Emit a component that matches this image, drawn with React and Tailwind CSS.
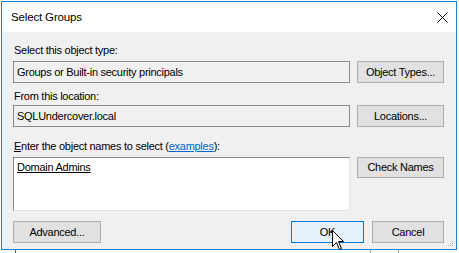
import React from "react";

function Btn({ children, w, primary }) {
  return (
    <div
      className={
        "h-[22px] flex items-center justify-center border " +
        (primary ? "border-[#0078d7] bg-[#e5f1fb] " : "border-[#adadad] bg-[#e1e1e1] ") +
        w
      }
    >
      {children}
    </div>
  );
}

export default function App() {
  return (
    <div className="w-[459px] h-[253px] bg-white relative overflow-hidden font-['Liberation_Sans',Arial,sans-serif] text-black">
      <div className="pt-[1px] pl-[1px]">
        <div className="w-[456px] h-[249px] border border-[#1883d7] flex flex-col">
          <div className="h-[30px] bg-white flex items-center justify-between pl-[9px] pr-[8px]">
            <span className="text-[11.5px] leading-[14px] tracking-[-0.15px]">Select Groups</span>
            <svg width="11" height="11" viewBox="0 0 11 11">
              <path d="M0.5 0.5 L10.5 10.5 M10.5 0.5 L0.5 10.5" stroke="#111" strokeWidth="1" fill="none" />
            </svg>
          </div>
          <div className="flex-1 bg-[#f0f0f0] pl-[11px] pr-[12px] flex flex-col text-[11px] leading-[13px] tracking-[-0.27px] relative">
            <div className="mt-[12px] pl-[1px]">Select this object type:</div>
            <div className="mt-[4px] flex gap-[7px]">
              <div className="w-[337px] h-[22px] border border-[#8a8a8a] bg-[#f0f0f0] flex items-center pl-[3px]">
                Groups or Built-in security principals
              </div>
              <Btn w="w-[87px]">Object Types...</Btn>
            </div>
            <div className="mt-[7px] pl-[1px]">From this location:</div>
            <div className="mt-[2px] flex gap-[7px]">
              <div className="w-[337px] h-[22px] border border-[#8a8a8a] bg-[#f0f0f0] flex items-center pl-[3px]">
                SQLUndercover.local
              </div>
              <Btn w="w-[87px]">Locations...</Btn>
            </div>
            <div className="mt-[13px] pl-[1px]">
              <span className="underline">E</span>nter the object names to select (
              <span className="text-[#0066cc] underline">examples</span>):
            </div>
            <div className="mt-[4px] flex gap-[7px] items-start">
              <div className="w-[337px] h-[54px] border border-[#8a8a8a] border-r-[#e3e3e3] border-b-[#e3e3e3] bg-white pl-[3px] pt-[3px]">
                <span className="underline">Domain Admins</span>
              </div>
              <Btn w="w-[87px] !h-[21px]">Check Names</Btn>
            </div>
            <div className="mt-[10px] flex items-center">
              <Btn w="w-[88px]">Advanced...</Btn>
              <div className="flex-1" />
              <Btn w="w-[73px]" primary>OK</Btn>
              <div className="w-[8px]" />
              <Btn w="w-[72px]">Cancel</Btn>
            </div>
            <svg className="absolute right-[2px] bottom-[2px]" width="6" height="6" viewBox="0 0 6 6">
              <rect x="4" y="0" width="1" height="1" fill="#b0b0b0" />
              <rect x="2" y="2" width="1" height="1" fill="#b0b0b0" />
              <rect x="4" y="2" width="1" height="1" fill="#b0b0b0" />
              <rect x="0" y="4" width="1" height="1" fill="#b0b0b0" />
              <rect x="2" y="4" width="1" height="1" fill="#b0b0b0" />
              <rect x="4" y="4" width="1" height="1" fill="#b0b0b0" />
            </svg>
          </div>
        </div>
      </div>
      <div className="absolute left-[15px] top-[250px] w-[1px] h-[3px] bg-[#606060]" />
      <div className="absolute left-[370px] top-[250px] w-[1px] h-[3px] bg-[#a0a0a0]" />
      <div className="absolute left-[398px] top-[250px] w-[1px] h-[3px] bg-[#a0a0a0]" />
      <svg className="absolute left-[332px] top-[230px]" width="13" height="21" viewBox="0 0 13 21">
        <path d="M0.5 0.5 L0.5 16.5 L4.5 12.5 L7.5 19.5 L9.5 18.5 L6.5 11.5 L11.5 11.5 Z" fill="#fff" stroke="#000" strokeWidth="1" strokeLinejoin="miter" />
      </svg>
    </div>
  );
}
